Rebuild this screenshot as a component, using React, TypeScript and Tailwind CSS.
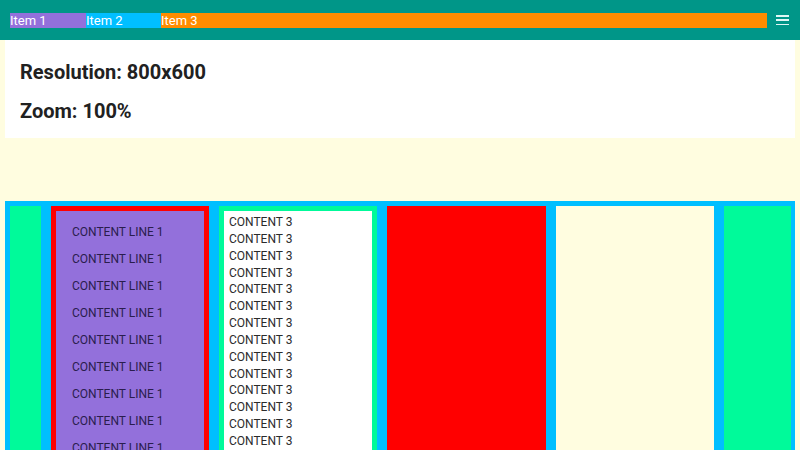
const NAV_ITEMS = [
  { label: 'Item 1', cls: 'w-[76px] bg-[#9370db]' },
  { label: 'Item 2', cls: 'w-[75px] bg-[#00bfff]' },
  { label: 'Item 3', cls: 'flex-1 bg-[#ff8c00]' },
]

const LINES_1 = Array.from({ length: 10 }, (_, i) => i)
const LINES_3 = Array.from({ length: 16 }, (_, i) => i)

export default function App() {
  return (
    <div className="h-[450px] w-full overflow-hidden bg-[#fffde0] font-['Roboto','Liberation_Sans',sans-serif]">
      {/* Top bar */}
      <header className="flex h-[40px] items-center bg-[#009688] pl-[10px] pr-[11px]">
        <nav className="flex h-[15px] flex-1">
          {NAV_ITEMS.map(item => (
            <span key={item.label} className={`${item.cls} text-[13px] leading-[15px] text-white`}>
              {item.label}
            </span>
          ))}
        </nav>
        <button className="ml-[9px] flex h-[12px] w-[13px] flex-col justify-between py-[1px]">
          <span className="block h-[1.5px] w-full bg-[#e0f7f5]"></span>
          <span className="block h-[1.5px] w-full bg-[#e0f7f5]"></span>
          <span className="block h-[1.5px] w-full bg-[#e0f7f5]"></span>
        </button>
      </header>

      {/* Info card */}
      <div className="mx-[5px] h-[98px] bg-white px-[15px] pt-[13px] text-[20px] font-bold leading-[39px] text-[#212121]">
        <p>Resolution: 800x600</p>
        <p>Zoom: 100%</p>
      </div>

      {/* Columns */}
      <div className="mx-[5px] mt-[63px] flex h-[320px] gap-[10px] bg-[#00bfff] p-[5px]">
        <div className="w-[31px] shrink-0 bg-[#00fa9a]"></div>

        <div className="w-[158px] shrink-0 overflow-hidden border-[5px] border-[#ff0000] bg-[#9370db] pl-[16px] pt-[7px]">
          {LINES_1.map(i => (
            <div key={i} className="flex h-[27px] items-center text-[12px] text-[#2a1d4d]">
              CONTENT LINE 1
            </div>
          ))}
        </div>

        <div className="w-[158px] shrink-0 overflow-hidden border-[5px] border-[#00fa9a] bg-white pl-[5px] pt-[3px]">
          {LINES_3.map(i => (
            <div key={i} className="text-[12px] leading-[16.85px] text-[#2b2b2b]">
              CONTENT 3
            </div>
          ))}
        </div>

        <div className="w-[159px] shrink-0 bg-[#ff0000]"></div>
        <div className="w-[158px] shrink-0 bg-[#fffde0]"></div>
        <div className="w-[67px] shrink-0 bg-[#00fa9a]"></div>
      </div>
    </div>
  )
}
